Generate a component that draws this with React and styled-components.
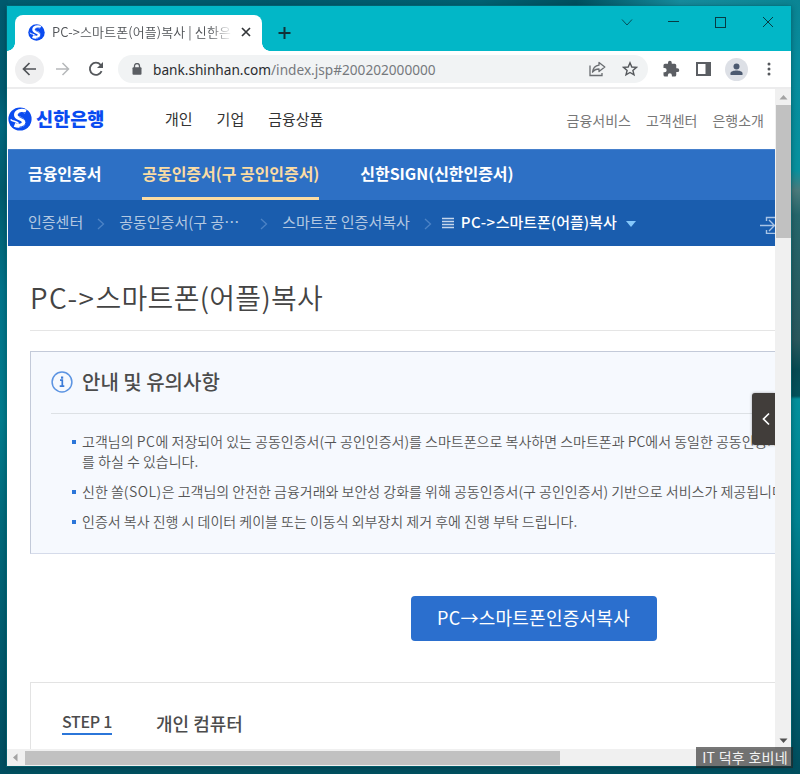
import React from 'react';
import styled, { createGlobalStyle } from 'styled-components';

const GlobalStyle = createGlobalStyle`
    * {
        box-sizing: border-box;
    }

    body {
        margin: 0;
        font-family: "Noto Sans CJK KR", sans-serif;
        overflow: hidden;
    }
`

const Desktop = styled.div`
    width: 800px;
    height: 774px;
    padding: 6px 9px 8px 7px;
    background:
        linear-gradient(180deg, #0b8594 0, #078c9d 60px, #08919e 170px, #4b7b7c 190px, #25666b 215px, #2a585d 340px, #064b53 370px, #04525c 396px, #03909c 399px, #018391 520px, #006271 640px, #004e5e 100%) right / 9px 100% no-repeat,
        linear-gradient(180deg, #005a6e 0, #005b70 90px, #006a80 125px, #005b6d 190px, #00748a 290px, #007c8d 420px, #006a7c 520px, #005568 700px, #004e60 100%) left / 8px 100% no-repeat,
        linear-gradient(90deg, #005d70 0, #00596c 35%, #006273 60%, #00505f 72%, #168b9d 85%, #0b8594 100%) top / 100% 8px no-repeat,
        #005060;
`

const Window = styled.div`
    position: relative;
    width: 784px;
    height: 760px;
    display: flex;
    flex-direction: column;
    background-color: #fff;
    box-shadow: 0 0 0 1px rgba(0, 120, 130, 0.45), 0 1px 6px rgba(0, 20, 30, 0.4);
`

const TabStrip = styled.div`
    height: 45px;
    flex: none;
    display: flex;
    padding: 9px 0 0 8px;
    background-color: #02b7c7;
`

const Tab = styled.div`
    position: relative;
    width: 247px;
    height: 36px;
    display: flex;
    align-items: center;
    padding: 0 11px 2px 13px;
    border-radius: 8px 8px 0 0;
    background-color: #fff;

    &::before,
    &::after {
        content: '';
        position: absolute;
        bottom: 0;
        width: 8px;
        height: 8px;
    }

    &::before {
        left: -8px;
        background: radial-gradient(circle at 0 0, transparent 7.5px, #fff 8px);
    }

    &::after {
        right: -8px;
        background: radial-gradient(circle at 100% 0, transparent 7.5px, #fff 8px);
    }
`

const TabTitle = styled.div`
    width: 182px;
    margin-left: 7px;
    overflow: hidden;
    white-space: nowrap;
    font-size: 13px;
    font-weight: 350;
    line-height: 20px;
    letter-spacing: 0.1px;
    color: #505357;
    mask-image: linear-gradient(90deg, #000 158px, transparent 181px);
`

const TabClose = styled.div`
    display: flex;
    margin-left: 7px;
`

const NewTab = styled.div`
    display: flex;
    padding: 11px 0 0 15px;
`

const WindowButtons = styled.div`
    display: flex;
    gap: 35px;
    margin: 1px 17px 0 auto;
`

const Toolbar = styled.div`
    height: 38px;
    flex: none;
    display: flex;
    align-items: center;
    padding: 0 15px 0 8px;
    border-bottom: 2px solid #ececed;
`

const NavButton = styled.div`
    width: 29px;
    height: 29px;
    display: flex;
    align-items: center;
    justify-content: center;
    margin-right: 4px;
    border-radius: 50%;
    background-color: ${props => (props.$active ? '#efeff0' : 'transparent')};
`

const AddressBar = styled.div`
    width: 530px;
    height: 28px;
    display: flex;
    align-items: center;
    margin-left: 4px;
    padding: 0 10px 0 14px;
    border-radius: 14px;
    background-color: #f1f3f4;
`

const Url = styled.div`
    flex: 1;
    margin: 2px 0 0 11px;
    font-family: "Noto Sans", sans-serif;
    font-size: 13.65px;
    line-height: 20px;
    color: #76797d;

    b {
        font-weight: 400;
        color: #2b2d30;
    }
`

const AddressIcons = styled.div`
    display: flex;
    gap: 16px;
`

const ToolIcons = styled.div`
    display: flex;
    align-items: center;
    margin-left: auto;
    gap: 14px;
`

const Avatar = styled.div`
    width: 23px;
    height: 23px;
    display: flex;
    align-items: center;
    justify-content: center;
    border-radius: 50%;
    background-color: #dde0e6;
`

const Body = styled.div`
    flex: 1;
    min-height: 0;
    display: grid;
    grid-template-columns: 768px 16px;
    grid-template-rows: 660px 17px;
`

const Page = styled.div`
    position: relative;
    overflow: hidden;
    padding-left: 1px;
    background-color: #fff;
`

const Latin = styled.span`
    letter-spacing: ${props => props.$space}px;
`

const Header = styled.div`
    height: 60px;
    display: flex;
    align-items: center;
`

const Logo = styled.div`
    width: 157px;
    display: flex;
    align-items: center;
    gap: 4px;
    font-size: 18.6px;
    font-weight: 900;
    line-height: 24px;
    color: #0a4bf0;
`

const LogoText = styled.span`
    margin-top: -2px;
`

const MainMenu = styled.div`
    display: flex;
    gap: 24px;
    font-size: 15px;
    line-height: 22px;
    color: #333;
`

const UtilMenu = styled.div`
    display: flex;
    gap: 15px;
    margin: 1px 11px 0 auto;
    font-size: 14px;
    line-height: 20px;
    color: #777;
`

const CertTabs = styled.div`
    width: 767px;
    height: 51px;
    display: flex;
    gap: 41px;
    padding-left: 20px;
    background-color: #2d70c5;
    border-top: 1px solid #4680cc;
`

const CertTab = styled.div`
    height: 50px;
    line-height: 46px;
    font-size: 16px;
    font-weight: 700;
    letter-spacing: -0.05px;
    white-space: nowrap;
    color: ${props => (props.$active ? '#fbdca3' : '#fff')};
    border-bottom: ${props => (props.$active ? '3px solid #fbdca3' : '0')};
`

const Breadcrumb = styled.div`
    width: 767px;
    height: 46px;
    display: flex;
    align-items: center;
    padding: 0 0 2px 20px;
    background-color: #1a5dae;
    overflow: hidden;
`

const Crumb = styled.div`
    font-size: 15px;
    line-height: 22px;
    white-space: nowrap;
    color: ${props => (props.$current ? '#fff' : '#b3c8e1')};
    font-weight: ${props => (props.$current ? 500 : 400)};
`

const CrumbArrow = styled.svg`
    flex: none;
    width: 8px;
    height: 12px;
    margin: 3px ${props => props.$after}px 0 ${props => props.$before}px;
`

const MenuIcon = styled.svg`
    flex: none;
    margin: 2px 7px 0 0;
`

const Caret = styled.svg`
    flex: none;
    margin: 4px 0 0 9px;
`

const ExitIcon = styled.svg`
    flex: none;
    margin: 6px 0 0 124px;
`

const Content = styled.div`
    width: 1029px;
    padding-left: 22px;
`

const Title = styled.h1`
    height: 85px;
    margin: 0;
    padding-top: 31px;
    border-bottom: 1px solid #e5e5e5;
    font-size: 28px;
    font-weight: 350;
    line-height: 40px;
    letter-spacing: 0.3px;
    color: #444;
`

const Notice = styled.div`
    height: 203px;
    margin-top: 20px;
    padding: 0 20px;
    border: 1px solid #c3cad9;
    border-bottom-color: #d5dbea;
    background-color: #f6f9fe;
`

const NoticeTitle = styled.div`
    height: 62px;
    display: flex;
    align-items: center;
    gap: 9px;
    padding-bottom: 1px;
    border-bottom: 1px solid #dde1e5;
    font-size: 20px;
    font-weight: 500;
    line-height: 28px;
    color: #4c4c4c;
`

const NoticeList = styled.ul`
    margin: 0;
    padding: 17px 0 0 21px;
    list-style: none;
`

const NoticeItem = styled.li`
    display: flex;
    margin-bottom: 10px;
    font-size: 14px;
    font-weight: 350;
    line-height: 20px;
    white-space: nowrap;
    color: #555;

    &::before {
        content: '';
        flex: none;
        width: 4px;
        height: 4px;
        margin: 9px 6px 0 0;
        background-color: #2b76d9;
    }
`

const ButtonRow = styled.div`
    display: flex;
    justify-content: center;
    margin: 42px 0 41px;
`

const CopyButton = styled.button`
    width: 246px;
    height: 45px;
    padding: 0 0 3px;
    border: 0;
    border-radius: 4px;
    background-color: #2b6fce;
    color: #fff;
    font-family: inherit;
    font-size: 18px;
    letter-spacing: 0.25px;
    white-space: nowrap;
`

const StepBox = styled.div`
    height: 120px;
    display: flex;
    align-items: flex-start;
    padding: 27px 0 0 31px;
    border: 1px solid #e3e3e3;
    color: #4c4c4c;
`

const StepLabel = styled.div`
    width: 50px;
    margin-right: 44px;
    border-bottom: 2px solid #2b76d9;
    font-size: 16px;
    font-weight: 500;
    line-height: 23px;
    letter-spacing: -0.3px;
    white-space: nowrap;
`

const StepName = styled.div`
    font-size: 18px;
    font-weight: 500;
    line-height: 26px;
`

const SideToggle = styled.div`
    position: absolute;
    right: 0;
    top: 304px;
    width: 23px;
    height: 52px;
    display: flex;
    align-items: center;
    justify-content: center;
    padding-left: 4px;
    border-radius: 3px 0 0 3px;
    background-color: #413d3a;
    box-shadow: 0 0 3px rgba(0, 0, 0, 0.35);
`

const VScroll = styled.div`
    display: flex;
    flex-direction: column;
    align-items: center;
    background-color: #f0f0f0;
`

const VThumb = styled.div`
    width: 15px;
    height: 133px;
    margin-top: -1px;
    background-color: #c1c1c1;
`

const HScroll = styled.div`
    grid-column: 1 / 3;
    display: flex;
    align-items: center;
    background-color: #f0f0f0;
`

const HThumb = styled.div`
    width: 535px;
    height: 14px;
    margin-left: 1px;
    background-color: #c1c1c1;
`

const ScrollArrow = styled.svg`
    flex: none;
    width: 17px;
    height: 17px;
    margin-top: ${props => (props.$end ? 'auto' : '0')};
`

const Watermark = styled.div`
    position: absolute;
    right: -2px;
    bottom: -2px;
    width: 97px;
    height: 21px;
    padding-right: 5px;
    background-color: rgba(35, 35, 35, 0.62);
    color: #f3f3f3;
    font-size: 14px;
    line-height: 20px;
    letter-spacing: 0.3px;
    text-align: right;
    white-space: nowrap;
`

function ShinhanMark({ size }) {
  return (
    <svg width={size} height={size} viewBox="0 0 24 24">
        <circle cx="12" cy="12" r="11.6" fill="#0a4bf0" />
        <path d="M17.8 4.6C13.5 2.6 8 4.2 8 8C8 11.8 15.8 11.2 15.8 15.2C15.8 18.4 11 19.6 6.5 17.8" fill="none" stroke="#fff" strokeWidth="4" />
        <path d="M18.5 6.2C14.5 4.8 10.2 5.4 10.2 8C10.2 10.8 18 11 18 15.4C17.8 18.2 14.5 20 11.5 20.2" fill="none" stroke="#0a4bf0" strokeWidth="1" />
        <path d="M2.6 12.4C5 14.8 8 13.8 10.6 16.6" fill="none" stroke="#fff" strokeWidth="1.4" />
    </svg>
  )
}

function BrowserTabs() {
  return (
    <TabStrip>
        <Tab>
            <ShinhanMark size={17} />
            <TabTitle>PC-&gt;스마트폰(어플)복사 | 신한은</TabTitle>
            <TabClose>
                <svg width="10" height="10" viewBox="0 0 10 10"><path d="M1 1L9 9M9 1L1 9" stroke="#333639" strokeWidth="1.7" /></svg>
            </TabClose>
        </Tab>
        <NewTab>
            <svg width="14" height="14" viewBox="0 0 14 14"><path d="M7.5 1V13M1.5 7H13.5" stroke="#123238" strokeWidth="2" /></svg>
        </NewTab>
        <WindowButtons>
            <svg width="12" height="12" viewBox="0 0 12 12"><path d="M1 3.5L6 9L11 3.5" fill="none" stroke="#074f59" /></svg>
            <svg width="12" height="12" viewBox="0 0 12 12"><path d="M0 5.5H11" stroke="#073b43" /></svg>
            <svg width="12" height="12" viewBox="0 0 12 12"><rect x="0.5" y="1.5" width="10" height="10" fill="none" stroke="#073b43" /></svg>
            <svg width="12" height="12" viewBox="0 0 12 12"><path d="M1 1L11 11M11 1L1 11" stroke="#073b43" /></svg>
        </WindowButtons>
    </TabStrip>
  )
}

function BrowserToolbar() {
  return (
    <Toolbar>
        <NavButton $active>
            <svg width="15" height="14" viewBox="0 0 15 14"><path d="M14 7H2M7.5 1L1.5 7L7.5 13" fill="none" stroke="#505357" strokeWidth="1.7" /></svg>
        </NavButton>
        <NavButton>
            <svg width="15" height="14" viewBox="0 0 15 14"><path d="M1 7H13M7.5 1L13.5 7L7.5 13" fill="none" stroke="#b6b8ba" strokeWidth="1.5" /></svg>
        </NavButton>
        <NavButton>
            <svg width="16" height="16" viewBox="0 0 16 16">
                <path d="M13.6 10.2A6.1 6.1 0 1 1 12.6 3.8L14 5.2" fill="none" stroke="#55585c" strokeWidth="1.8" />
                <path d="M15 1V7H9Z" fill="#55585c" />
            </svg>
        </NavButton>
        <AddressBar>
            <svg width="10" height="12" viewBox="0 0 10 12">
                <rect x="0.5" y="4.3" width="9" height="7.4" rx="1" fill="#5b5e63" />
                <path d="M2.5 5V3A2.5 2.5 0 0 1 7.5 3V5" fill="none" stroke="#5b5e63" strokeWidth="1.3" />
            </svg>
            <Url><b>bank.shinhan.com</b>/index.jsp#200202000000</Url>
            <AddressIcons>
                <svg width="17" height="16" viewBox="0 0 17 16">
                    <path d="M1 4.5V14.5H13V12" fill="none" stroke="#6a6d71" strokeWidth="1.3" />
                    <path d="M10 1.5L15.8 6L10 10.5V8C7 8 5 9 3.5 11.2C4 7 6.5 4.7 10 4.2Z" fill="none" stroke="#6a6d71" strokeWidth="1.3" strokeLinejoin="round" />
                </svg>
                <svg width="16" height="16" viewBox="0 0 16 16">
                    <path d="M8 1.8L9.8 6L14.4 6.4L10.9 9.4L12 13.9L8 11.5L4 13.9L5.1 9.4L1.6 6.4L6.2 6Z" fill="none" stroke="#55585c" strokeWidth="1.4" />
                </svg>
            </AddressIcons>
        </AddressBar>
        <ToolIcons>
            <svg width="18" height="18" viewBox="0 0 24 24">
                <path d="M20.5 11H19V7a2 2 0 0 0-2-2h-4V3.5a2.5 2.5 0 0 0-5 0V5H4a2 2 0 0 0-2 2v3.8h1.5a2.7 2.7 0 0 1 0 5.4H2V20a2 2 0 0 0 2 2h3.8v-1.5a2.7 2.7 0 0 1 5.4 0V22H17a2 2 0 0 0 2-2v-4h1.5a2.5 2.5 0 0 0 0-5z" fill="#5b5e63" />
            </svg>
            <svg width="17" height="16" viewBox="0 0 17 16">
                <path d="M2 1H17V15H2ZM4 3V13H11.5V3Z" fill="#5b5e63" fillRule="evenodd" />
            </svg>
            <Avatar>
                <svg width="13" height="13" viewBox="0 0 13 13">
                    <circle cx="6.5" cy="3.4" r="3" fill="#4c5a70" />
                    <path d="M0.5 12V10.2C0.5 8.3 4 7.5 6.5 7.5S12.5 8.3 12.5 10.2V12Z" fill="#4c5a70" />
                </svg>
            </Avatar>
            <svg width="14" height="14" viewBox="0 0 14 14">
                <circle cx="7" cy="2" r="1.5" fill="#55585c" />
                <circle cx="7" cy="7" r="1.5" fill="#55585c" />
                <circle cx="7" cy="12" r="1.5" fill="#55585c" />
            </svg>
        </ToolIcons>
    </Toolbar>
  )
}

function Chevron({ before, after }) {
  return (
    <CrumbArrow $before={before} $after={after} viewBox="0 0 8 12">
        <path d="M1 1L6.5 6L1 11" fill="none" stroke="#4c83c6" strokeWidth="1.3" />
    </CrumbArrow>
  )
}

function BankHeader() {
  return (
    <>
        <Header>
            <Logo><ShinhanMark size={24} /><LogoText>신한은행</LogoText></Logo>
            <MainMenu>
                <span>개인</span>
                <span>기업</span>
                <span>금융상품</span>
            </MainMenu>
            <UtilMenu>
                <span>금융서비스</span>
                <span>고객센터</span>
                <span>은행소개</span>
            </UtilMenu>
        </Header>
        <CertTabs>
            <CertTab>금융인증서</CertTab>
            <CertTab $active>공동인증서(구 공인인증서)</CertTab>
            <CertTab>신한SIGN(신한인증서)</CertTab>
        </CertTabs>
        <Breadcrumb>
            <Crumb>인증센터</Crumb>
            <Chevron before={14} after={14} />
            <Crumb>공동인증서(구 공…</Crumb>
            <Chevron before={21} after={14} />
            <Crumb>스마트폰 인증서복사</Crumb>
            <Chevron before={14} after={10} />
            <MenuIcon width="12" height="12" viewBox="0 0 12 12"><path d="M0 1.5H12M0 4.5H12M0 7.5H12M0 10.5H12" stroke="#c5d6ec" strokeWidth="1.5" /></MenuIcon>
            <Crumb $current><Latin $space={0.5}>PC-&gt;</Latin>스마트폰(어플)복사</Crumb>
            <Caret width="10" height="6" viewBox="0 0 10 6"><path d="M0 0H10L5 6Z" fill="#86c8fb" /></Caret>
            <ExitIcon width="20" height="18" viewBox="0 0 20 18"><path d="M0 9.5H14M9 4L14.5 9.5L9 15M6.5 5V1.5H18V17.5H6.5V14" fill="none" stroke="#a9c4e6" strokeWidth="1.4" /></ExitIcon>
        </Breadcrumb>
    </>
  )
}

function CopyGuide() {
  return (
    <Content>
        <Title><Latin $space={1.5}>PC-&gt;</Latin>스마트폰(어플)복사</Title>
        <Notice>
            <NoticeTitle>
                <svg width="22" height="22" viewBox="0 0 22 22">
                    <circle cx="11" cy="11" r="9.9" fill="none" stroke="#5c94e2" strokeWidth="1.5" />
                    <path d="M9 9.2H11.3V15M8.7 15.2H13.3" fill="none" stroke="#3b7bd8" strokeWidth="1.7" />
                    <rect x="10" y="5.5" width="2.2" height="2.2" fill="#3b7bd8" />
                </svg>
                안내 및 유의사항
            </NoticeTitle>
            <NoticeList>
                <NoticeItem>
                    <span>
                        고객님의 <Latin $space={0.6}>PC</Latin>에 저장되어 있는 공동인증서(구 공인인증서)를 스마트폰으로 복사하면 스마트폰과 PC에서 동일한 공동인증서
                        <br />
                        를 하실 수 있습니다.
                    </span>
                </NoticeItem>
                <NoticeItem>
                    <span>신한 쏠<Latin $space={0.5}>(SOL)</Latin>은 고객님의 안전한 금융거래와 보안성 강화를 위해 공동인증서(구 공인인증서) 기반으로 서비스가 제공됩니다.</span>
                </NoticeItem>
                <NoticeItem>인증서 복사 진행 시 데이터 케이블 또는 이동식 외부장치 제거 후에 진행 부탁 드립니다.</NoticeItem>
            </NoticeList>
        </Notice>
        <ButtonRow>
            <CopyButton>PC→스마트폰인증서복사</CopyButton>
        </ButtonRow>
        <StepBox>
            <StepLabel>STEP 1</StepLabel>
            <StepName>개인 컴퓨터</StepName>
        </StepBox>
    </Content>
  )
}

function App() {
  return (
    <Desktop>
        <GlobalStyle />
        <Window>
            <BrowserTabs />
            <BrowserToolbar />
            <Body>
                <Page>
                    <BankHeader />
                    <CopyGuide />
                    <SideToggle>
                        <svg width="8" height="14" viewBox="0 0 8 14"><path d="M7 1.5L1.5 7L7 12.5" fill="none" stroke="#fff" strokeWidth="1.7" /></svg>
                    </SideToggle>
                </Page>
                <VScroll>
                    <ScrollArrow viewBox="0 0 17 17"><path d="M4.5 10.5H12.5L8.5 6Z" fill="#a3a3a3" /></ScrollArrow>
                    <VThumb />
                    <ScrollArrow $end viewBox="0 0 17 17"><path d="M4.5 6.5H12.5L8.5 11Z" fill="#505050" /></ScrollArrow>
                </VScroll>
                <HScroll>
                    <ScrollArrow viewBox="0 0 17 17"><path d="M10.5 4.5V12.5L6 8.5Z" fill="#a3a3a3" /></ScrollArrow>
                    <HThumb />
                </HScroll>
            </Body>
            <Watermark>IT 덕후 호비네</Watermark>
        </Window>
    </Desktop>
  )
}

export default App
